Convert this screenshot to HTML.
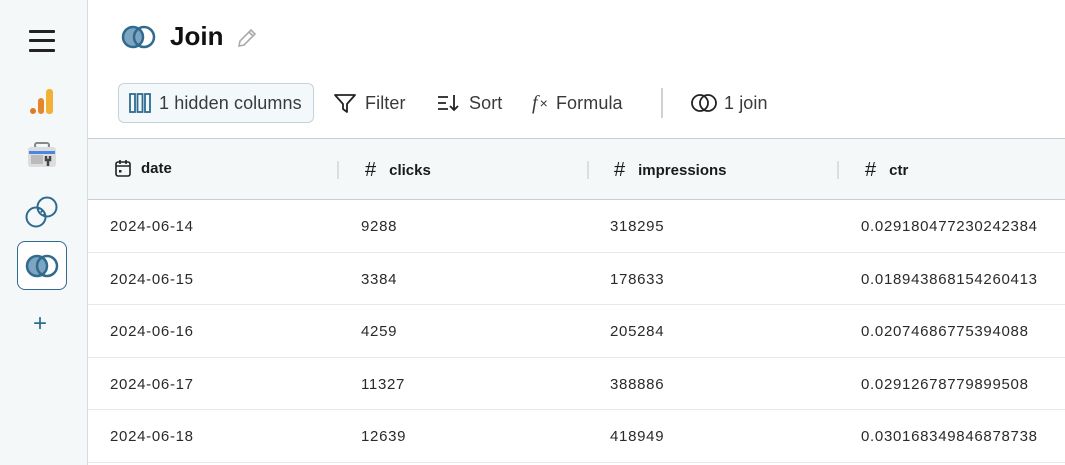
<!DOCTYPE html><html><head><style>
*{margin:0;padding:0;box-sizing:border-box}
body{width:1065px;height:465px;overflow:hidden;background:#fff;font-family:"Liberation Sans",sans-serif;position:relative;color:#1a1a1a}
.side{position:absolute;left:0;top:0;width:88px;height:465px;background:#f5f8f9;border-right:1px solid #d8dcde}
.abs{position:absolute}
.tb{position:absolute;top:83px;height:40px;display:flex;align-items:center;font-size:18px;color:#3a3a3a;letter-spacing:0.1px}
.hdr{position:absolute;left:88px;top:138px;width:977px;height:62px;background:#f5f8f9;border-top:1px solid #c9cdd0;border-bottom:1px solid #c9cdd0}
.hc{position:absolute;top:20px;font-size:15px;font-weight:bold;display:flex;align-items:center;gap:13px}
.sep{position:absolute;top:22px;width:2px;height:18px;background:#dcdfe1}
.row{position:absolute;left:88px;width:977px;height:52.5px;border-bottom:1px solid #e6e8ea;font-size:15px;color:#2a2a2a;letter-spacing:0.7px}
.row span{position:absolute;top:18px}
</style></head><body>
<div class="side">
<div class="abs" style="left:29px;top:30px;width:26px;height:3px;background:#222;border-radius:1px"></div>
<div class="abs" style="left:29px;top:39px;width:26px;height:3px;background:#222;border-radius:1px"></div>
<div class="abs" style="left:29px;top:49px;width:26px;height:3px;background:#222;border-radius:1px"></div>
<div class="abs" style="left:30px;top:108px;width:6px;height:6px;border-radius:3px;background:#e07a22"></div>
<div class="abs" style="left:38px;top:98px;width:6px;height:16px;border-radius:3px;background:#e6862a"></div>
<div class="abs" style="left:46px;top:89px;width:7px;height:25px;border-radius:3px;background:#f2b134"></div>
<svg class="abs" style="left:26px;top:142px" width="32" height="26"><rect x="9" y="1" width="14" height="5" rx="2" fill="none" stroke="#888" stroke-width="2"/><rect x="2" y="5" width="28" height="20" rx="3" fill="#ddd"/><rect x="3" y="9" width="26" height="3" fill="#4a86e8"/><rect x="5" y="13" width="12" height="9" fill="#bbb"/><path d="M20 14v4h4v-4M22 18v6" stroke="#444" stroke-width="2.5" fill="none"/></svg>
<svg class="abs" style="left:25px;top:195px" width="34" height="34"><circle cx="11" cy="22" r="9.5" fill="none" stroke="#2f6b8f" stroke-width="2"/><circle cx="22" cy="12" r="9.5" fill="none" stroke="#2f6b8f" stroke-width="2"/><path d="M13 13l8 8" stroke="#2f6b8f" stroke-width="2" stroke-dasharray="2 2"/></svg>
<div class="abs" style="left:17px;top:241px;width:50px;height:49px;border:1px solid #2f6b8f;border-radius:8px;background:#fff"></div>
<svg class="abs" style="left:24px;top:253px" width="36" height="26"><circle cx="13" cy="13" r="10" fill="#7ea5bf" stroke="#2f6b8f" stroke-width="2.5"/><circle cx="23" cy="13" r="10" fill="none" stroke="#2f6b8f" stroke-width="2.5"/></svg>
<div class="abs" style="left:33px;top:310px;font-size:24px;color:#2f6b8f">+</div>
</div>
<svg class="abs" style="left:120px;top:24px" width="38" height="26"><circle cx="13" cy="13" r="10" fill="#7ea5bf" stroke="#2f6b8f" stroke-width="2.5"/><circle cx="24" cy="13" r="10" fill="none" stroke="#2f6b8f" stroke-width="2.5"/></svg>
<div class="abs" style="left:170px;top:21px;font-size:26px;font-weight:bold;color:#111">Join</div>
<svg class="abs" style="left:236px;top:27px" width="22" height="22"><path d="M3 19l1-5L15 3l4 4L8 18z M13 5l4 4" fill="none" stroke="#aaa" stroke-width="1.6"/></svg>
<div class="tb" style="left:118px;width:196px;border:1px solid #c5d2d9;border-radius:6px;background:#f3f9fb;padding-left:10px;gap:8px"><svg width="22" height="22"><rect x="1" y="2" width="5" height="18" fill="none" stroke="#2f6b8f" stroke-width="1.8"/><rect x="8.5" y="2" width="5" height="18" fill="none" stroke="#2f6b8f" stroke-width="1.8"/><rect x="16" y="2" width="5" height="18" fill="none" stroke="#2f6b8f" stroke-width="1.8"/></svg>1 hidden columns</div>
<div class="tb" style="left:333px;gap:8px"><svg width="24" height="22"><path d="M2 3h20l-8 9v8l-4-3v-5z" fill="none" stroke="#222" stroke-width="1.8" stroke-linejoin="round"/></svg>Filter</div>
<div class="tb" style="left:437px;gap:8px"><svg width="24" height="20"><path d="M1 4h10M1 10h8M1 16h10M17 2v15M13 13l4 4 4-4" fill="none" stroke="#222" stroke-width="1.8"/></svg>Sort</div>
<div class="tb" style="left:532px;gap:8px"><span style="font-family:'Liberation Serif',serif;font-style:italic;font-size:20px">f</span><span style="font-size:14px;margin-left:-6px">×</span>Formula</div>
<div class="abs" style="left:661px;top:88px;width:2px;height:30px;background:#cdd1d4"></div>
<div class="tb" style="left:690px;gap:6px"><svg width="28" height="20"><circle cx="10" cy="10" r="8" fill="none" stroke="#222" stroke-width="1.8"/><circle cx="18" cy="10" r="8" fill="none" stroke="#222" stroke-width="1.8"/></svg>1 join</div>
<div class="hdr">
<div class="hc" style="left:27px;gap:10px"><svg width="16" height="18"><rect x="1" y="3" width="14" height="14" rx="2" fill="none" stroke="#222" stroke-width="1.6"/><path d="M1 7h14M5 1v4M11 1v4" stroke="#222" stroke-width="1.6"/><rect x="4" y="11" width="2.5" height="2.5" fill="#222"/></svg>date</div>
<div class="sep" style="left:249px"></div>
<div class="hc" style="left:277px"><span style="font-size:20px;font-weight:normal">#</span>clicks</div>
<div class="sep" style="left:499px"></div>
<div class="hc" style="left:526px"><span style="font-size:20px;font-weight:normal">#</span>impressions</div>
<div class="sep" style="left:749px"></div>
<div class="hc" style="left:777px"><span style="font-size:20px;font-weight:normal">#</span>ctr</div>
</div>
<div class="row" style="top:200px"><span style="left:22px">2024-06-14</span><span style="left:273px">9288</span><span style="left:522px">318295</span><span style="left:773px">0.029180477230242384</span></div>
<div class="row" style="top:252.5px"><span style="left:22px">2024-06-15</span><span style="left:273px">3384</span><span style="left:522px">178633</span><span style="left:773px">0.018943868154260413</span></div>
<div class="row" style="top:305px"><span style="left:22px">2024-06-16</span><span style="left:273px">4259</span><span style="left:522px">205284</span><span style="left:773px">0.02074686775394088</span></div>
<div class="row" style="top:357.5px"><span style="left:22px">2024-06-17</span><span style="left:273px">11327</span><span style="left:522px">388886</span><span style="left:773px">0.02912678779899508</span></div>
<div class="row" style="top:410px"><span style="left:22px">2024-06-18</span><span style="left:273px">12639</span><span style="left:522px">418949</span><span style="left:773px">0.030168349846878738</span></div>
</body></html>
